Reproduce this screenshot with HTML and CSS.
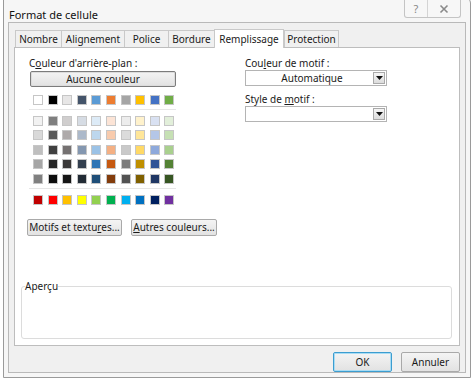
FILE: index.html
```html
<!DOCTYPE html>
<html lang="fr">
<head>
<meta charset="utf-8">
<title>Format de cellule</title>
<link rel="stylesheet" href="styles.css">
</head>
<body>
<div class="window">
  <div class="titlebar">
    <span class="title">Format de cellule</span>
    <div class="caption">
      <span class="cap-btn help">?</span>
      <span class="cap-btn close">
        <svg width="10" height="10" viewBox="0 0 10 10"><path d="M1.5 1.5 L8.5 8.5 M8.5 1.5 L1.5 8.5" stroke="#8a8a8a" stroke-width="1.6" fill="none"/></svg>
      </span>
    </div>
  </div>
  <div class="client">
    <div class="tabs">
      <span class="tab t1">Nombre</span>
      <span class="tab t2">Alignement</span>
      <span class="tab t3">Police</span>
      <span class="tab t4">Bordure</span>
      <span class="tab t5 active">Remplissage</span>
      <span class="tab t6">Protection</span>
    </div>
    <div class="panel">
      <div class="cols">
        <div class="left">
          <div class="label">C<u>o</u>uleur d'arrière-plan :</div>
          <div class="btn none-btn">Aucune couleur</div>
          <div class="palette theme-top">
            <i style="background:#FFFFFF"></i><i style="background:#000000"></i><i style="background:#E7E6E6"></i><i style="background:#44546A"></i><i style="background:#5B9BD5"></i><i style="background:#ED7D31"></i><i style="background:#A5A5A5"></i><i style="background:#FFC000"></i><i style="background:#4472C4"></i><i style="background:#70AD47"></i>
          </div>
          <div class="sep"></div>
          <div class="palette shades">
            <i style="background:#F2F2F2"></i><i style="background:#7F7F7F"></i><i style="background:#D0CECE"></i><i style="background:#D6DCE4"></i><i style="background:#DDEBF7"></i><i style="background:#FCE4D6"></i><i style="background:#EDEDED"></i><i style="background:#FFF2CC"></i><i style="background:#D9E1F2"></i><i style="background:#E2EFDA"></i>
            <i style="background:#D9D9D9"></i><i style="background:#595959"></i><i style="background:#AEAAAA"></i><i style="background:#ACB9CA"></i><i style="background:#BDD7EE"></i><i style="background:#F8CBAD"></i><i style="background:#DBDBDB"></i><i style="background:#FFE699"></i><i style="background:#B4C6E7"></i><i style="background:#C6E0B4"></i>
            <i style="background:#BFBFBF"></i><i style="background:#404040"></i><i style="background:#757171"></i><i style="background:#8497B0"></i><i style="background:#9BC2E6"></i><i style="background:#F4B084"></i><i style="background:#C9C9C9"></i><i style="background:#FFD966"></i><i style="background:#8EA9DB"></i><i style="background:#A9D08E"></i>
            <i style="background:#A6A6A6"></i><i style="background:#262626"></i><i style="background:#3A3838"></i><i style="background:#333F4F"></i><i style="background:#2F75B5"></i><i style="background:#C65911"></i><i style="background:#7B7B7B"></i><i style="background:#BF8F00"></i><i style="background:#305496"></i><i style="background:#548235"></i>
            <i style="background:#808080"></i><i style="background:#0D0D0D"></i><i style="background:#161616"></i><i style="background:#222B35"></i><i style="background:#1F4E78"></i><i style="background:#833C0C"></i><i style="background:#525252"></i><i style="background:#806000"></i><i style="background:#203764"></i><i style="background:#375623"></i>
          </div>
          <div class="sep"></div>
          <div class="palette standard">
            <i style="background:#C00000"></i><i style="background:#FF0000"></i><i style="background:#FFC000"></i><i style="background:#FFFF00"></i><i style="background:#92D050"></i><i style="background:#00B050"></i><i style="background:#00B0F0"></i><i style="background:#0070C0"></i><i style="background:#002060"></i><i style="background:#7030A0"></i>
          </div>
          <div class="btn-row">
            <span class="btn tbtn motifs">Motifs et textu<u>r</u>es...</span>
            <span class="btn tbtn autres"><u>A</u>utres couleurs...</span>
          </div>
        </div>
        <div class="right">
          <div class="label">Cou<u>l</u>eur de motif :</div>
          <div class="select">
            <span class="sel-text">Automatique</span>
            <span class="sel-arrow"><svg width="7" height="4" viewBox="0 0 7 4"><path d="M0 0 H7 L3.5 4 Z" fill="#111"/></svg></span>
          </div>
          <div class="label">Style de <u>m</u>otif :</div>
          <div class="select">
            <span class="sel-text"></span>
            <span class="sel-arrow"><svg width="7" height="4" viewBox="0 0 7 4"><path d="M0 0 H7 L3.5 4 Z" fill="#111"/></svg></span>
          </div>
        </div>
      </div>
      <fieldset class="preview">
        <legend>Aperçu</legend>
      </fieldset>
    </div>
    <div class="footer">
      <span class="btn ok">OK</span>
      <span class="btn cancel">Annuler</span>
    </div>
  </div>
</div>
</body>
</html>
```
FILE: styles.css
```css
html, body {
  margin: 0;
  padding: 0;
}
body {
  width: 474px;
  height: 383px;
  overflow: hidden;
  background: #ffffff;
  font-family: "Noto Sans", "Open Sans", sans-serif;
  font-size: 10px;
  color: #1a1a1a;
}
.window {
  box-sizing: border-box;
  margin-left: 3px;
  margin-top: -3px;
  width: 468px;
  height: 381px;
  border: 1px solid #9a9a9a;
  border-top-right-radius: 6px;
  background: #f6f6f6;
  padding: 0 4px 4px 4px;
  display: flex;
  flex-direction: column;
}
.titlebar {
  height: 24px;
  flex-shrink: 0;
  display: flex;
  justify-content: space-between;
  align-items: flex-start;
}
.title {
  margin-top: 9px;
  margin-left: 1px;
  font-size: 11px;
  color: #111;
}
.caption {
  display: flex;
  margin-top: 2px;
  margin-right: 5px;
  border: 1px solid #c4c4c4;
  border-top: none;
  border-radius: 0 0 3px 3px;
  background: #f7f7f7;
}
.cap-btn {
  height: 17px;
  display: flex;
  align-items: center;
  justify-content: center;
  color: #888;
}
.help {
  width: 22px;
  border-right: 1px solid #d4d4d4;
  font-size: 11px;
}
.close {
  width: 32px;
}
.client {
  flex: 1;
  background: #f0f0f0;
  border: 1px solid #b9b9b9;
  display: flex;
  flex-direction: column;
  padding: 0 5px 0 5px;
}
.tabs {
  display: flex;
  flex-shrink: 0;
  align-items: flex-end;
  height: 24px;
  padding-left: 1px;
}
.tab {
  box-sizing: border-box;
  height: 17px;
  border: 1px solid #c9c9c9;
  border-bottom: none;
  background: #f0f0f0;
  display: flex;
  align-items: center;
  justify-content: center;
  margin-right: -1px;
  color: #1a1a1a;
}
.t1 { width: 47px; }
.t2 { width: 64px; }
.t3 { width: 45px; }
.t4 { width: 47px; }
.t5 { width: 70px; }
.t6 { width: 55px; }
.tab.active {
  height: 19px;
  background: #ffffff;
  position: relative;
  top: 1px;
  z-index: 1;
  margin-right: 0;
  align-items: flex-start;
  padding-top: 2px;
}
.panel {
  height: 299px;
  flex-shrink: 0;
  box-sizing: border-box;
  background: #ffffff;
  border: 1px solid #bdbdbd;
  display: flex;
  flex-direction: column;
  padding: 0 7px 0 6px;
}
.cols {
  display: flex;
  flex-shrink: 0;
  height: 224px;
}
.left {
  width: 224px;
  padding-left: 8px;
  box-sizing: border-box;
}
.right {
  width: 142px;
}
.label {
  height: 12px;
  line-height: 12px;
  margin-top: 9px;
}
.btn {
  box-sizing: border-box;
  display: flex;
  align-items: center;
  justify-content: center;
  border: 1px solid #a9a9a9;
  border-radius: 2px;
  background: linear-gradient(#f4f4f4, #e2e2e2);
  color: #1a1a1a;
}
.none-btn {
  width: 146px;
  height: 16px;
  margin-top: 2px;
  margin-left: 1px;
  border: 1px solid #7c7c7c;
  box-shadow: inset 0 0 0 1px #dcdcdc;
}
.palette {
  display: grid;
  grid-template-columns: repeat(10, 10px);
  column-gap: 4.6px;
  row-gap: 4.4px;
  margin-left: 4px;
}
.palette i {
  display: block;
  width: 10px;
  height: 10px;
  box-sizing: border-box;
  border: 1px solid #c6c6c6;
}
.theme-top { margin-top: 8px; }
.shades { margin-top: 6px; }
.standard { margin-top: 6px; }
.sep {
  width: 147px;
  height: 1px;
  background: #e6e6e6;
  margin-top: 4px;
}
.btn-row {
  display: flex;
  gap: 9px;
  margin-top: 14px;
  margin-left: -2px;
}
.tbtn {
  display: block;
  height: 17px;
  line-height: 15px;
  text-align: center;
  white-space: nowrap;
}
.motifs { width: 95px; }
.autres { width: 86px; }
.right .label:first-child { margin-top: 9px; }
.right .label { margin-top: 7px; }
.select {
  box-sizing: border-box;
  width: 142px;
  height: 16px;
  border: 1px solid #b4b4b4;
  background: #fff;
  display: flex;
  align-items: center;
  padding: 1px;
}
.right .label + .select { margin-top: 1px; }
.sel-text {
  flex: 1;
  text-align: center;
  padding-left: 4px;
}
.sel-arrow {
  box-sizing: border-box;
  width: 12px;
  height: 12px;
  border: 1px solid #a9a9a9;
  background: linear-gradient(#f5f5f5, #dcdcdc);
  display: flex;
  align-items: center;
  justify-content: center;
}
.preview {
  flex-shrink: 0;
  box-sizing: border-box;
  margin: 7px 0 0 0;
  padding: 0;
  height: 60px;
  min-height: 60px;
  border: 1px solid #dcdcdc;
  border-radius: 3px;
}
.preview legend {
  padding: 0;
  margin-left: 3px;
  font-size: 10px;
  color: #1a1a1a;
}
.footer {
  flex: 1;
  display: flex;
  justify-content: flex-end;
  align-items: flex-start;
  gap: 9px;
  padding-top: 6px;
}
.footer .btn {
  width: 59px;
  height: 20px;
}
.footer .ok {
  border: 1px solid #3c9dd0;
  box-shadow: inset 0 0 0 1px #a8dcf4;
}
```
